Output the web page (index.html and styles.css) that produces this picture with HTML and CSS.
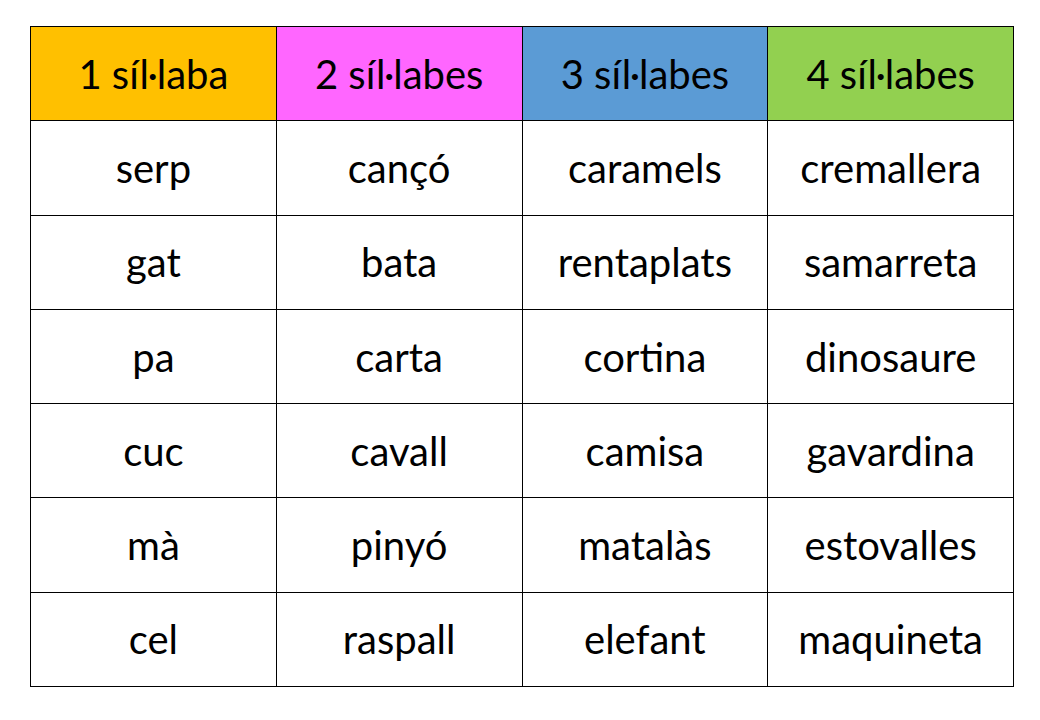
FILE: index.html
```html
<!DOCTYPE html>
<html lang="ca">
<head>
<meta charset="utf-8">
<link rel="stylesheet" href="styles.css">
</head>
<body>
<table class="grid">
  <tr class="head">
    <th class="c1">1 síl·laba</th>
    <th class="c2">2 síl·labes</th>
    <th class="c3">3 síl·labes</th>
    <th class="c4">4 síl·labes</th>
  </tr>
  <tr><td>serp</td><td>cançó</td><td>caramels</td><td>cremallera</td></tr>
  <tr><td>gat</td><td>bata</td><td>rentaplats</td><td>samarreta</td></tr>
  <tr><td>pa</td><td>carta</td><td>cortina</td><td>dinosaure</td></tr>
  <tr><td>cuc</td><td>cavall</td><td>camisa</td><td>gavardina</td></tr>
  <tr><td>mà</td><td>pinyó</td><td>matalàs</td><td>estovalles</td></tr>
  <tr><td>cel</td><td>raspall</td><td>elefant</td><td>maquineta</td></tr>
</table>
</body>
</html>
```
FILE: styles.css
```css
html, body {
  margin: 0;
  padding: 0;
  background: #ffffff;
}
body {
  padding: 26px 0 0 30px;
  font-family: Lato, "Open Sans", "Liberation Sans", sans-serif;
}
.grid {
  border-collapse: collapse;
  table-layout: fixed;
  width: 984px;
}
.grid tr {
  height: 94.3px;
}
.grid th, .grid td {
  border: 1px solid #000;
  padding: 0;
  text-align: center;
  vertical-align: middle;
  font-size: 40px;
  line-height: 1;
  font-weight: 400;
  color: #000;
}
.c1 { background: #ffc000; }
.c2 { background: #ff66ff; }
.c3 { background: #5b9bd5; }
.c4 { background: #92d050; }
```
